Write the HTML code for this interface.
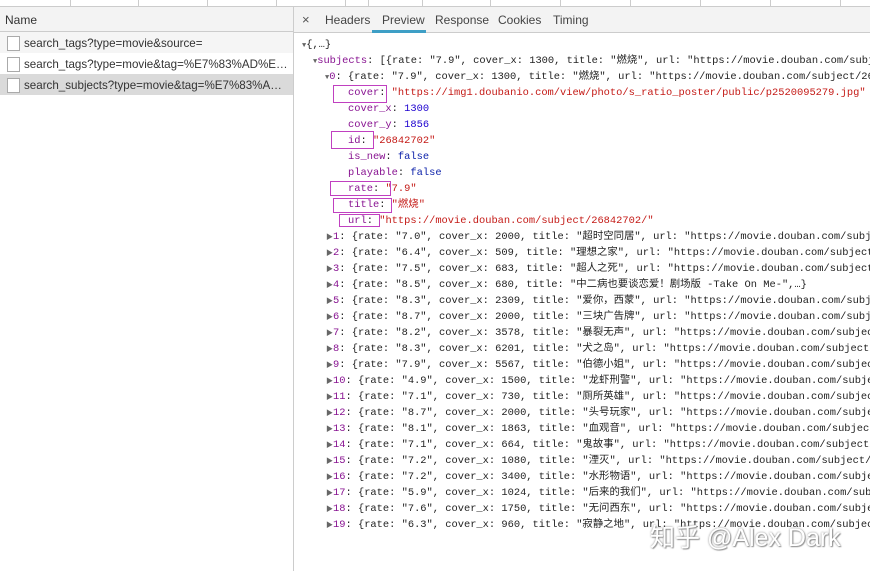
<!DOCTYPE html>
<html><head><meta charset="utf-8"><style>
body{margin:0;width:870px;height:571px;overflow:hidden;background:#fff;font-family:"Liberation Sans","Noto Sans CJK SC",sans-serif;position:relative}
.top{position:absolute;left:0;top:0;width:870px;height:6px;background:#fff;border-bottom:1px solid #ccc}
.top i{position:absolute;top:0;height:6px;border-left:1px solid #ccc}
.left{position:absolute;left:0;top:7px;width:293px;height:564px;border-right:1px solid #ccc}
.hdr{height:25px;background:#f3f3f3;border-bottom:1px solid #ccc;font-size:12px;color:#333;line-height:26px;padding-left:5px;box-sizing:border-box}
.row{height:21px;font-size:11.6px;color:#333;line-height:23px;white-space:nowrap;overflow:hidden;position:relative;padding-left:24px}
.row:before{content:"";position:absolute;left:7px;top:4px;width:11px;height:13px;border:1px solid #aaa;background:#fff}
.rh{position:absolute;left:294px;top:7px;width:576px;height:25px;background:#f3f3f3;border-bottom:1px solid #ccc;font-size:12px;color:#444;line-height:26px}
.rh span{position:absolute;top:0}
.code{position:absolute;left:0;top:37px;width:870px;height:534px;overflow:hidden;font-family:"Liberation Mono","Noto Sans CJK SC",monospace;font-size:10.4px;line-height:16px;white-space:pre;color:#222}
.code div{position:absolute;white-space:pre}
.k{color:#565656}.p{color:#881391}.s{color:#c41a16}.n{color:#1c00cf}.b{color:#0d22aa}.t{color:#666;font-size:7px}
.box{position:absolute;border:1px solid #c040c0}
.wm{position:absolute;left:650px;top:518px;font-size:25px;color:#fff;text-shadow:0 0 2px #888,1px 1px 1px #999;white-space:nowrap}
</style></head><body>
<div class="top"><i style="left:70px"></i><i style="left:138px"></i><i style="left:207px"></i><i style="left:276px"></i><i style="left:345px"></i><i style="left:368px"></i><i style="left:422px"></i><i style="left:490px"></i><i style="left:560px"></i><i style="left:630px"></i><i style="left:700px"></i><i style="left:770px"></i><i style="left:840px"></i></div>
<div class="left"><div class="hdr">Name</div>
<div class="row" style="background:#f5f5f5">search_tags?type=movie&amp;source=</div>
<div class="row">search_tags?type=movie&amp;tag=%E7%83%AD%E…</div>
<div class="row" style="background:#dadada">search_subjects?type=movie&amp;tag=%E7%83%A…</div>
</div>
<div class="rh"><span style="left:8px;font-size:13px;color:#555">×</span><span style="left:31px">Headers</span><span style="left:88px">Preview</span><span style="left:141px">Response</span><span style="left:204px">Cookies</span><span style="left:259px">Timing</span>
<div style="position:absolute;left:78px;top:23px;width:54px;height:3px;background:#3e9fc6"></div></div>
<div class="code">
<div style="left:302px;top:0"><span class="t">▼</span>{,…}</div>
<div style="left:313px;top:16px"><span class="t">▼</span><span class="p">subjects</span>: [{rate: "7.9", cover_x: 1300, title: "燃烧", url: "https://movie.douban.com/subject/26842702/"</div>
<div style="left:325px;top:32px"><span class="t">▼</span><span class="p">0</span>: {rate: "7.9", cover_x: 1300, title: "燃烧", url: "https://movie.douban.com/subject/26842702/"</div>
<div style="left:348px;top:48px"><span class="p">cover</span>: <span class="s">"https://img1.doubanio.com/view/photo/s_ratio_poster/public/p2520095279.jpg"</span></div>
<div style="left:348px;top:64px"><span class="p">cover_x</span>: <span class="n">1300</span></div>
<div style="left:348px;top:80px"><span class="p">cover_y</span>: <span class="n">1856</span></div>
<div style="left:348px;top:96px"><span class="p">id</span>: <span class="s">"26842702"</span></div>
<div style="left:348px;top:112px"><span class="p">is_new</span>: <span class="b">false</span></div>
<div style="left:348px;top:128px"><span class="p">playable</span>: <span class="b">false</span></div>
<div style="left:348px;top:144px"><span class="p">rate</span>: <span class="s">"7.9"</span></div>
<div style="left:348px;top:160px"><span class="p">title</span>: <span class="s">"燃烧"</span></div>
<div style="left:348px;top:176px"><span class="p">url</span>: <span class="s">"https://movie.douban.com/subject/26842702/"</span></div>
<div style="left:326px;top:192px"><span class="t">▶</span><span class="p">1</span>: {rate: "7.0", cover_x: 2000, title: "超时空同居", url: "https://movie.douban.com/subject/</div>
<div style="left:326px;top:208px"><span class="t">▶</span><span class="p">2</span>: {rate: "6.4", cover_x: 509, title: "理想之家", url: "https://movie.douban.com/subject/</div>
<div style="left:326px;top:224px"><span class="t">▶</span><span class="p">3</span>: {rate: "7.5", cover_x: 683, title: "超人之死", url: "https://movie.douban.com/subject/</div>
<div style="left:326px;top:240px"><span class="t">▶</span><span class="p">4</span>: {rate: "8.5", cover_x: 680, title: "中二病也要谈恋爱！剧场版 -Take On Me-",…}</div>
<div style="left:326px;top:256px"><span class="t">▶</span><span class="p">5</span>: {rate: "8.3", cover_x: 2309, title: "爱你，西蒙", url: "https://movie.douban.com/subject/</div>
<div style="left:326px;top:272px"><span class="t">▶</span><span class="p">6</span>: {rate: "8.7", cover_x: 2000, title: "三块广告牌", url: "https://movie.douban.com/subject/</div>
<div style="left:326px;top:288px"><span class="t">▶</span><span class="p">7</span>: {rate: "8.2", cover_x: 3578, title: "暴裂无声", url: "https://movie.douban.com/subject/</div>
<div style="left:326px;top:304px"><span class="t">▶</span><span class="p">8</span>: {rate: "8.3", cover_x: 6201, title: "犬之岛", url: "https://movie.douban.com/subject/</div>
<div style="left:326px;top:320px"><span class="t">▶</span><span class="p">9</span>: {rate: "7.9", cover_x: 5567, title: "伯德小姐", url: "https://movie.douban.com/subject/</div>
<div style="left:326px;top:336px"><span class="t">▶</span><span class="p">10</span>: {rate: "4.9", cover_x: 1500, title: "龙虾刑警", url: "https://movie.douban.com/subject/</div>
<div style="left:326px;top:352px"><span class="t">▶</span><span class="p">11</span>: {rate: "7.1", cover_x: 730, title: "厕所英雄", url: "https://movie.douban.com/subject/</div>
<div style="left:326px;top:368px"><span class="t">▶</span><span class="p">12</span>: {rate: "8.7", cover_x: 2000, title: "头号玩家", url: "https://movie.douban.com/subject/</div>
<div style="left:326px;top:384px"><span class="t">▶</span><span class="p">13</span>: {rate: "8.1", cover_x: 1863, title: "血观音", url: "https://movie.douban.com/subject/</div>
<div style="left:326px;top:400px"><span class="t">▶</span><span class="p">14</span>: {rate: "7.1", cover_x: 664, title: "鬼故事", url: "https://movie.douban.com/subject/</div>
<div style="left:326px;top:416px"><span class="t">▶</span><span class="p">15</span>: {rate: "7.2", cover_x: 1080, title: "湮灭", url: "https://movie.douban.com/subject/</div>
<div style="left:326px;top:432px"><span class="t">▶</span><span class="p">16</span>: {rate: "7.2", cover_x: 3400, title: "水形物语", url: "https://movie.douban.com/subject/</div>
<div style="left:326px;top:448px"><span class="t">▶</span><span class="p">17</span>: {rate: "5.9", cover_x: 1024, title: "后来的我们", url: "https://movie.douban.com/subject/</div>
<div style="left:326px;top:464px"><span class="t">▶</span><span class="p">18</span>: {rate: "7.6", cover_x: 1750, title: "无问西东", url: "https://movie.douban.com/subject/</div>
<div style="left:326px;top:480px"><span class="t">▶</span><span class="p">19</span>: {rate: "6.3", cover_x: 960, title: "寂静之地", url: "https://movie.douban.com/subject/</div>
</div>
<div class="box" style="left:333px;top:85px;width:52px;height:16px"></div>
<div class="box" style="left:331px;top:131px;width:41px;height:16px"></div>
<div class="box" style="left:330px;top:181px;width:59px;height:13px"></div>
<div class="box" style="left:333px;top:198px;width:57px;height:13px"></div>
<div class="box" style="left:339px;top:214px;width:39px;height:11px"></div>
<div class="wm">知乎 @Alex Dark</div>
</body></html>
